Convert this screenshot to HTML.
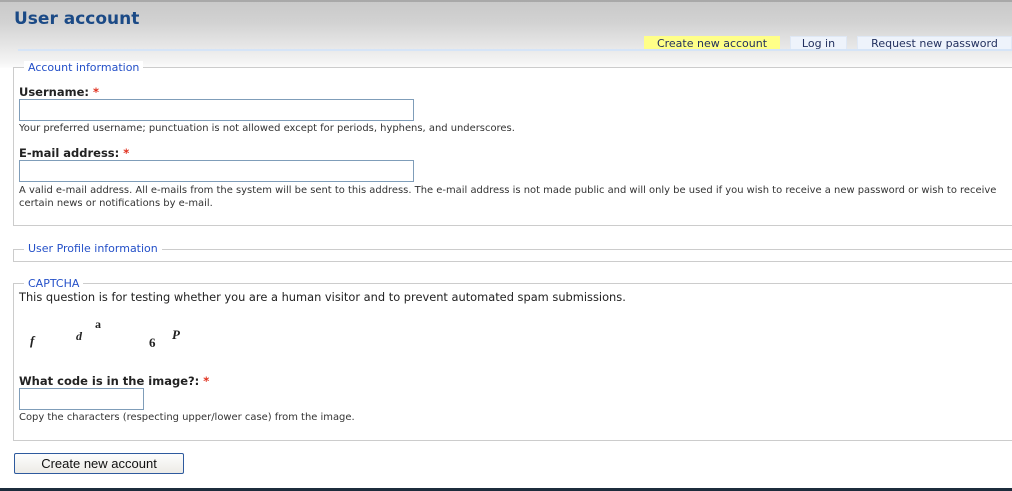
<!DOCTYPE html>
<html><head><meta charset="utf-8"><style>
*{margin:0;padding:0;box-sizing:border-box}
body{width:1012px;height:491px;overflow:hidden;position:relative;background:#fff;font-family:"DejaVu Sans","Liberation Sans",sans-serif;color:#222}
.bg{position:absolute;left:0;top:0;width:1012px;height:68px;background:linear-gradient(#c9c9c9 0px,#d2d2d2 20px,#f4f4f4 60px,#fff 68px);border-top:2px solid #a8a8a8}
.a{position:absolute;white-space:nowrap}
h1{position:absolute;left:14px;top:9px;font-size:17px;font-weight:bold;color:#1b4a86;letter-spacing:0}
.line{position:absolute;left:18px;top:49px;width:994px;height:2px;background:#d5e4f7}
.tab{position:absolute;top:36px;height:13px;font-size:11px;line-height:14px;color:#22305e;text-align:center;background:#eef3fb;border:1px solid #dfe8f5;border-bottom:none}
fieldset{position:absolute;left:13px;width:1010px;border:1px solid #ccc;border-right:none}
.lg{position:absolute;background:#fff;padding:0 4px;font-size:11px;color:#2450c8;line-height:13px}
.lab{font-size:11.5px;font-weight:bold;color:#222}
.lab span{color:#e0301e}
.d{font-size:9.95px;color:#333}
.in{position:absolute;border:1px solid #7f9db9;background:#fff;height:22px}
.btn{position:absolute;left:14px;top:453px;width:170px;height:21px;border:1px solid #2e5a9e;border-radius:2px;background:linear-gradient(#fdfdfd,#ecebe6);font-family:"Liberation Sans",sans-serif;font-size:13px;text-align:center;line-height:19px;color:#111}
.cap{position:absolute;font-family:"Liberation Serif",serif;font-style:italic;font-size:13px;color:#222;font-weight:bold}
</style></head><body>
<div class="bg"></div>
<h1>User account</h1>
<div class="line"></div>
<div class="tab" style="left:644px;width:136px;background:#ffff88;border-color:#ffff88">Create new account</div>
<div class="tab" style="left:790px;width:57px">Log in</div>
<div class="tab" style="left:857px;width:155px">Request new password</div>

<fieldset style="top:67px;height:159px"></fieldset>
<div class="lg a" style="left:24px;top:61px">Account information</div>
<div class="a lab" style="left:19px;top:85px">Username: <span>*</span></div>
<div class="in" style="left:19px;top:99px;width:395px"></div>
<div class="a d" style="left:19px;top:123px">Your preferred username; punctuation is not allowed except for periods, hyphens, and underscores.</div>
<div class="a lab" style="left:19px;top:146px">E-mail address: <span>*</span></div>
<div class="in" style="left:19px;top:160px;width:395px"></div>
<div class="a d" style="left:19px;top:184px;line-height:13px">A valid e-mail address. All e-mails from the system will be sent to this address. The e-mail address is not made public and will only be used if you wish to receive a new password or wish to receive<br>certain news or notifications by e-mail.</div>

<fieldset style="top:249px;height:13px"></fieldset>
<div class="lg a" style="left:24px;top:242px">User Profile information</div>

<fieldset style="top:283px;height:158px"></fieldset>
<div class="lg a" style="left:24px;top:277px">CAPTCHA</div>
<div class="a" style="left:19px;top:290px;font-size:11.4px;color:#222">This question is for testing whether you are a human visitor and to prevent automated spam submissions.</div>
<div class="cap" style="left:30px;top:333px">f</div>
<div class="cap" style="left:76px;top:329px;font-size:12px">d</div>
<div class="cap" style="left:95px;top:317px;font-size:12px;font-style:normal">a</div>
<div class="cap" style="left:149px;top:335px;font-style:normal">6</div>
<div class="cap" style="left:172px;top:327px">P</div>
<div class="a lab" style="left:19px;top:374px">What code is in the image?: <span>*</span></div>
<div class="in" style="left:19px;top:388px;width:125px"></div>
<div class="a d" style="left:19px;top:412px">Copy the characters (respecting upper/lower case) from the image.</div>

<div class="btn">Create new account</div>
<div style="position:absolute;left:0;top:488px;width:1012px;height:3px;background:#1c2c3c"></div>
</body></html>
